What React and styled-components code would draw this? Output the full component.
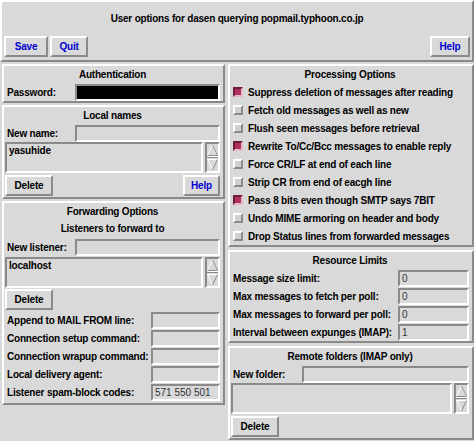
import React from 'react'
import styled, { createGlobalStyle, css } from 'styled-components'

const GlobalStyle = createGlobalStyle`
	html, body {
		margin: 0;
		padding: 0;
		background: #d9d9d9;
	}
	body {
		width: 474px;
		height: 441px;
		overflow: hidden;
		font-family: "Liberation Sans", Arial, sans-serif;
		font-size: 10px;
		font-weight: bold;
		letter-spacing: -0.2px;
		color: #000;
	}
	* {
		box-sizing: border-box;
	}
`

const raised = css`
	border: 2px solid;
	border-color: #ffffff #8a8a8a #8a8a8a #ffffff;
`

const sunken = css`
	border: 2px solid;
	border-color: #8a8a8a #ffffff #ffffff #8a8a8a;
`

const Window = styled.div`
	width: 474px;
	height: 441px;
	display: flex;
	flex-direction: column;
`

const TopBar = styled.div`
	${raised};
	height: 62px;
	display: flex;
	flex-direction: column;
`

const Title = styled.div`
	height: 33px;
	line-height: 33px;
	text-align: center;
`

const ButtonRow = styled.div`
	display: flex;
	gap: 2px;
	padding: 1px 2px 0 2px;
`

const Button = styled.div`
	${raised};
	width: ${(p) => p.$w}px;
	height: 21px;
	display: flex;
	align-items: center;
	justify-content: center;
	color: ${(p) => (p.$blue ? '#0000d0' : '#000')};
	margin-left: ${(p) => (p.$right ? 'auto' : '0')};
`

const Body = styled.div`
	flex: 1;
	display: flex;
	gap: 3px;
	padding: 2px 0 0 2px;
	overflow: hidden;
`

const Column = styled.div`
	width: ${(p) => (p.$w ? `${p.$w}px` : 'auto')};
	flex: ${(p) => (p.$w ? 'none' : '1')};
	display: flex;
	flex-direction: column;
	gap: ${(p) => p.$gap || 3}px;
`

const Section = styled.div`
	${raised};
	padding: 0 3px ${(p) => p.$pb || 0}px 1px;
	display: flex;
	flex-direction: column;
	flex: none;
`

const SectionTitle = styled.div`
	height: ${(p) => p.$h || 17}px;
	line-height: ${(p) => p.$h || 17}px;
	text-align: center;
`

const Row = styled.div`
	height: 18px;
	display: flex;
	align-items: center;
`

const Label = styled.div`
	width: ${(p) => p.$w}px;
	padding-left: 2px;
	flex: none;
	white-space: nowrap;
`

const Entry = styled.div`
	${sunken};
	flex: 1;
	height: 17px;
	background: ${(p) => (p.$dark ? '#000' : '#d9d9d9')};
	font-weight: normal;
	letter-spacing: 0;
	color: #333;
	padding-left: 2px;
	line-height: 13px;
	font-size: 10px;
`

const ListRow = styled.div`
	display: flex;
	gap: 2px;
	height: 31px;
	margin-top: ${(p) => p.$mt || 0}px;
`

const ListBox = styled.div`
	${sunken};
	flex: 1;
	padding: 1px 2px;
	line-height: 12px;
`

const ScrollTrough = styled.div`
	${sunken};
	width: 15px;
	flex: none;
	display: flex;
`

const ButtonLine = styled.div`
	display: flex;
	align-items: center;
	height: ${(p) => p.$h || 23}px;
`

const CheckRow = styled.div`
	height: 18px;
	display: flex;
	align-items: center;
	padding-left: 2px;
	gap: 5px;
	white-space: nowrap;
`

const Box = styled.span`
	width: 10px;
	height: 10px;
	flex: none;
	border: 2px solid;
	border-color: ${(p) =>
		p.$on ? '#6b1d3a #e8b8c8 #e8b8c8 #6b1d3a' : '#ffffff #8a8a8a #8a8a8a #ffffff'};
	background: ${(p) => (p.$on ? '#b03060' : '#d0d0d0')};
`

const Scrollbar = () => (
	<ScrollTrough>
		<svg width="11" height="27" viewBox="0 0 11 27">
			<polyline points="0.5,11 5.5,1 10.5,11" fill="none" stroke="#ffffff" />
			<line x1="0.5" y1="11.5" x2="10.5" y2="11.5" stroke="#8a8a8a" />
			<line x1="5.5" y1="1" x2="10.5" y2="11" stroke="#8a8a8a" />
			<line x1="0" y1="13.5" x2="11" y2="13.5" stroke="#8a8a8a" />
			<line x1="0" y1="12.5" x2="11" y2="12.5" stroke="#ffffff" />
			<line x1="0.5" y1="15.5" x2="10.5" y2="15.5" stroke="#ffffff" />
			<line x1="0.5" y1="15.5" x2="5.5" y2="26" stroke="#ffffff" />
			<line x1="5.5" y1="26" x2="10.5" y2="15.5" stroke="#8a8a8a" />
		</svg>
	</ScrollTrough>
)

const processing = [
	['Suppress deletion of messages after reading', true],
	['Fetch old messages as well as new', false],
	['Flush seen messages before retrieval', false],
	['Rewrite To/Cc/Bcc messages to enable reply', true],
	['Force CR/LF at end of each line', false],
	['Strip CR from end of eacgh line', false],
	['Pass 8 bits even though SMTP says 7BIT', true],
	['Undo MIME armoring on header and body', false],
	['Drop Status lines from forwarded messages', false],
]

const forwarding = [
	['Append to MAIL FROM line:', ''],
	['Connection setup command:', ''],
	['Connection wrapup command:', ''],
	['Local delivery agent:', ''],
	['Listener spam-block codes:', '571 550 501'],
]

const limits = [
	['Message size limit:', '0'],
	['Max messages to fetch per poll:', '0'],
	['Max messages to forward per poll:', '0'],
	['Interval between expunges (IMAP):', '1'],
]

const App = () => {
	return (
		<Window>
			<GlobalStyle />
			<TopBar>
				<Title>User options for dasen querying popmail.typhoon.co.jp</Title>
				<ButtonRow>
					<Button $w={44} $blue>Save</Button>
					<Button $w={38} $blue>Quit</Button>
					<Button $w={40} $blue $right>Help</Button>
				</ButtonRow>
			</TopBar>
			<Body>
				<Column $w={223} $gap={2}>
					<Section>
						<SectionTitle>Authentication</SectionTitle>
						<Row>
							<Label $w={70}>Password:</Label>
							<Entry $dark />
						</Row>
					</Section>
					<Section>
						<SectionTitle>Local names</SectionTitle>
						<Row>
							<Label $w={70}>New name:</Label>
							<Entry />
						</Row>
						<ListRow>
							<ListBox>yasuhide</ListBox>
							<Scrollbar />
						</ListRow>
						<ButtonLine $h={24}>
							<Button $w={48}>Delete</Button>
							<Button $w={37} $blue $right>Help</Button>
						</ButtonLine>
					</Section>
					<Section $pb={2}>
						<SectionTitle>Forwarding Options</SectionTitle>
						<SectionTitle $h={18}>Listeners to forward to</SectionTitle>
						<Row>
							<Label $w={70}>New listener:</Label>
							<Entry />
						</Row>
						<ListRow $mt={1}>
							<ListBox>localhost</ListBox>
							<Scrollbar />
						</ListRow>
						<ButtonLine>
							<Button $w={48}>Delete</Button>
						</ButtonLine>
						{forwarding.map(([label, value]) => (
							<Row key={label}>
								<Label $w={146}>{label}</Label>
								<Entry>{value}</Entry>
							</Row>
						))}
					</Section>
				</Column>
				<Column>
					<Section>
						<SectionTitle>Processing Options</SectionTitle>
						{processing.map(([text, on]) => (
							<CheckRow key={text}>
								<Box $on={on} />
								{text}
							</CheckRow>
						))}
					</Section>
					<Section>
						<SectionTitle>Resource Limits</SectionTitle>
						{limits.map(([label, value]) => (
							<Row key={label}>
								<Label $w={167}>{label}</Label>
								<Entry>{value}</Entry>
							</Row>
						))}
					</Section>
					<Section>
						<SectionTitle>Remote folders (IMAP only)</SectionTitle>
						<Row>
							<Label $w={71}>New folder:</Label>
							<Entry />
						</Row>
						<ListRow>
							<ListBox />
							<Scrollbar />
						</ListRow>
						<ButtonLine $h={24}>
							<Button $w={48}>Delete</Button>
						</ButtonLine>
					</Section>
				</Column>
			</Body>
		</Window>
	)
}

export default App
